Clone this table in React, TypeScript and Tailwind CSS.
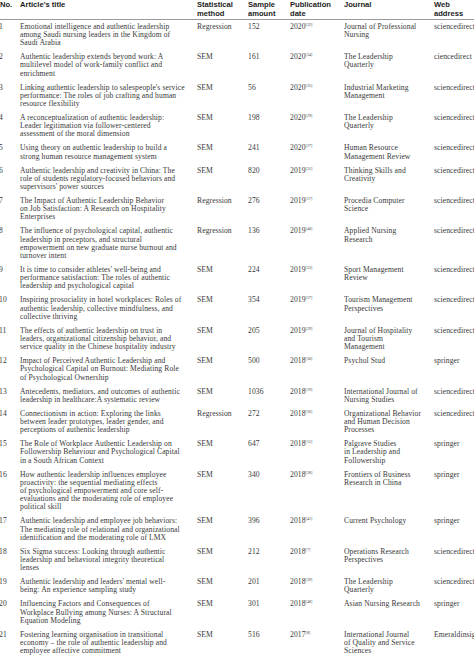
type Row = {
  title: string[];
  method: string;
  sample: string;
  year: string;
  ref: string;
  journal: string[];
  web: string;
};

const rows: Row[] = [
  { title: ['Emotional intelligence and authentic leadership', 'among Saudi nursing leaders in the Kingdom of', 'Saudi Arabia'], method: 'Regression', sample: '152', year: '2020', ref: '32', journal: ['Journal of Professional', 'Nursing'], web: 'sciencedirect' },
  { title: ['Authentic leadership extends beyond work: A', 'multilevel model of work-family conflict and', 'enrichment'], method: 'SEM', sample: '161', year: '2020', ref: '34', journal: ['The Leadership', 'Quarterly'], web: 'ciencedirect' },
  { title: ["Linking authentic leadership to salespeople's service", 'performance: The roles of job crafting and human', 'resource flexibility'], method: 'SEM', sample: '56', year: '2020', ref: '35', journal: ['Industrial Marketing', 'Management'], web: 'sciencedirect' },
  { title: ['A reconceptualization of authentic leadership:', 'Leader legitimation via follower-centered', 'assessment of the moral dimension'], method: 'SEM', sample: '198', year: '2020', ref: '29', journal: ['The Leadership', 'Quarterly'], web: 'sciencedirect' },
  { title: ['Using theory on authentic leadership to build a', 'strong human resource management system'], method: 'SEM', sample: '241', year: '2020', ref: '27', journal: ['Human Resource', 'Management Review'], web: 'sciencedirect' },
  { title: ['Authentic leadership and creativity in China: The', 'role of students regulatory-focused behaviors and', "supervisors' power sources"], method: 'SEM', sample: '820', year: '2019', ref: '31', journal: ['Thinking Skills and', 'Creativity'], web: 'sciencedirect' },
  { title: ['The Impact of Authentic Leadership Behavior', 'on Job Satisfaction: A Research on Hospitality', 'Enterprises'], method: 'Regression', sample: '276', year: '2019', ref: '17', journal: ['Procedia Computer', 'Science'], web: 'sciencedirect' },
  { title: ['The influence of psychological capital, authentic', 'leadership in preceptors, and structural', 'empowerment on new graduate nurse burnout and', 'turnover intent'], method: 'Regression', sample: '136', year: '2019', ref: '40', journal: ['Applied Nursing', 'Research'], web: 'sciencedirect' },
  { title: ["It is time to consider athletes' well-being and", 'performance satisfaction: The roles of authentic', 'leadership and psychological capital'], method: 'SEM', sample: '224', year: '2019', ref: '33', journal: ['Sport Management', 'Review'], web: 'sciencedirect' },
  { title: ['Inspiring prosociality in hotel workplaces: Roles of', 'authentic leadership, collective mindfulness, and', 'collective thriving'], method: 'SEM', sample: '354', year: '2019', ref: '37', journal: ['Tourism Management', 'Perspectives'], web: 'sciencedirect' },
  { title: ['The effects of authentic leadership on trust in', 'leaders, organizational citizenship behavior, and', 'service quality in the Chinese hospitality industry'], method: 'SEM', sample: '205', year: '2019', ref: '39', journal: ['Journal of Hospitality', 'and Tourism', 'Management'], web: 'sciencedirect' },
  { title: ['Impact of Perceived Authentic Leadership and', 'Psychological Capital on Burnout: Mediating Role', 'of Psychological Ownership'], method: 'SEM', sample: '500', year: '2018', ref: '30', journal: ['Psychol Stud'], web: 'springer' },
  { title: ['Antecedents, mediators, and outcomes of authentic', 'leadership in healthcare:A systematic review'], method: 'SEM', sample: '1036', year: '2018', ref: '19', journal: ['International Journal of', 'Nursing Studies'], web: 'sciencedirect' },
  { title: ['Connectionism in action: Exploring the links', 'between leader prototypes, leader gender, and', 'perceptions of authentic leadership'], method: 'Regression', sample: '272', year: '2018', ref: '36', journal: ['Organizational Behavior', 'and Human Decision', 'Processes'], web: 'sciencedirect' },
  { title: ['The Role of Workplace Authentic Leadership on', 'Followership Behaviour and Psychological Capital', 'in a South African Context'], method: 'SEM', sample: '647', year: '2018', ref: '15', journal: ['Palgrave Studies', 'in Leadership and', 'Followership'], web: 'springer' },
  { title: ['How authentic leadership influences employee', 'proactivity: the sequential mediating effects', 'of psychological empowerment and core self-', 'evaluations and the moderating role of employee', 'political skill'], method: 'SEM', sample: '340', year: '2018', ref: '28', journal: ['Frontiers of Business', 'Research in China'], web: 'springer' },
  { title: ['Authentic leadership and employee job behaviors:', 'The mediating role of relational and organizational', 'identification and the moderating role of LMX'], method: 'SEM', sample: '396', year: '2018', ref: '41', journal: ['Current Psychology'], web: 'springer' },
  { title: ['Six Sigma success: Looking through authentic', 'leadership and behavioral integrity theoretical', 'lenses'], method: 'SEM', sample: '212', year: '2018', ref: '7', journal: ['Operations Research', 'Perspectives'], web: 'sciencedirect' },
  { title: ["Authentic leadership and leaders' mental well-", 'being: An experience sampling study'], method: 'SEM', sample: '201', year: '2018', ref: '39', journal: ['The Leadership', 'Quarterly'], web: 'sciencedirect' },
  { title: ['Influencing Factors and Consequences of', 'Workplace Bullying among Nurses: A Structural', 'Equation Modeling'], method: 'SEM', sample: '301', year: '2018', ref: '48', journal: ['Asian Nursing Research'], web: 'springer' },
  { title: ['Fostering learning organisation in transitional', 'economy – the role of authentic leadership and', 'employee affective commitment'], method: 'SEM', sample: '516', year: '2017', ref: '8', journal: ['International Journal', 'of Quality and Service', 'Sciences'], web: 'Emeraldinsight' },
];

const cols = 'grid grid-cols-[20px_177px_51px_42px_54px_90px_40px]';

function Lines({ items }: { items: string[] }) {
  return (
    <div>
      {items.map((l, i) => (
        <div key={i} className="whitespace-nowrap">{l}</div>
      ))}
    </div>
  );
}

export default function App() {
  return (
    <div className="w-[474px] h-[660px] overflow-hidden bg-white">
      {/* header */}
      <div
        className={`${cols} h-[20px] pt-[1px] border-b border-[#9a9a9a] text-[7.6px] leading-[8.6px] font-bold text-[#1c1c1c]`}
        style={{ fontFamily: '"Liberation Sans", Arial, sans-serif' }}
      >
        <div className="whitespace-nowrap">No.</div>
        <div>Article's title</div>
        <div>Statistical<br />method</div>
        <div>Sample<br />amount</div>
        <div>Publication<br />date</div>
        <div>Journal</div>
        <div className="whitespace-nowrap">Web<br />address</div>
      </div>

      {/* body */}
      <div
        className="text-[7.6px] leading-[8.2px] tracking-[0.1px] text-[#383838]"
        style={{ fontFamily: '"Liberation Serif", "Times New Roman", serif' }}
      >
        {rows.map((r, i) => (
          <div key={i} className={`${cols} py-[2.9px]`}>
            <div className="-ml-px whitespace-nowrap">{i + 1}</div>
            <Lines items={r.title} />
            <div>{r.method}</div>
            <div>{r.sample}</div>
            <div className="whitespace-nowrap">
              {r.year}
              <span className="relative -top-[3px] text-[4px] leading-none tracking-normal">[{r.ref}]</span>
            </div>
            <Lines items={r.journal} />
            <div className="whitespace-nowrap">{r.web}</div>
          </div>
        ))}
      </div>
    </div>
  );
}
